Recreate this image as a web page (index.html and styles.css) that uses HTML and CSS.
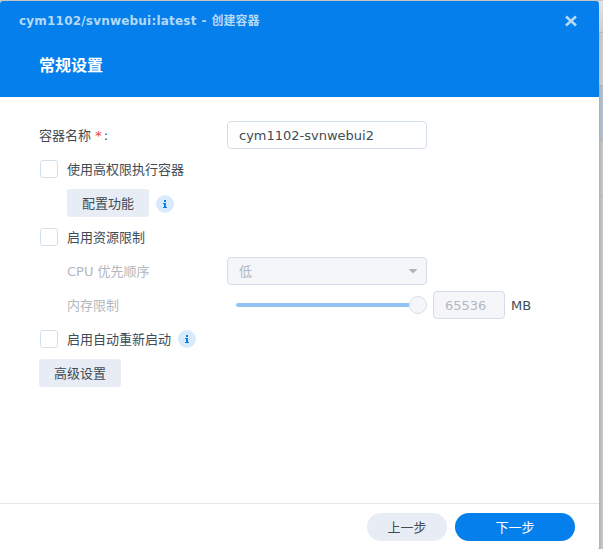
FILE: index.html
```
<!DOCTYPE html>
<html lang="zh-CN">
<head>
<meta charset="utf-8">
<title>创建容器</title>
<link rel="stylesheet" href="styles.css">
</head>
<body>
<div class="desktop">
  <main class="dialog">
    <header class="header">
      <div class="titlebar">
        <span class="title"><span class="title-name">cym1102/svnwebui:latest</span><span class="dash">-</span>创建容器</span>
        <svg class="close" width="12" height="12" viewBox="0 0 12 12"><path d="M1 1.5 11 10.5M11 1.5 1 10.5"/></svg>
      </div>
      <h1 class="heading">常规设置</h1>
    </header>
    <section class="form">
      <div class="row">
        <span class="label">容器名称 <span class="required">*</span>:</span>
        <span class="field name">cym1102-svnwebui2</span>
      </div>
      <div class="row"><span class="checkbox"></span><span class="text">使用高权限执行容器</span></div>
      <div class="row indent">
        <span class="button">配置功能</span>
        <svg class="info low" width="18" height="18" viewBox="0 0 18 18"><circle cx="9" cy="9" r="9"/><path d="M8 5h2v2H8zM7 8h3v4h1v1H7v-1h1V9H7z"/></svg>
      </div>
      <div class="row"><span class="checkbox"></span><span class="text">启用资源限制</span></div>
      <div class="row indent disabled">
        <span class="label">CPU 优先顺序</span>
        <span class="field select">低<svg width="10" height="5" viewBox="0 0 10 5"><path d="M0.5 0h9L5 4.5z"/></svg></span>
      </div>
      <div class="row indent disabled">
        <span class="label">内存限制</span>
        <span class="slider"><span class="track"></span><span class="thumb"></span></span>
        <span class="field memory">65536</span>
        <span class="unit">MB</span>
      </div>
      <div class="row">
        <span class="checkbox"></span><span class="text">启用自动重新启动</span>
        <svg class="info" width="18" height="18" viewBox="0 0 18 18"><circle cx="9" cy="9" r="9"/><path d="M8 5h2v2H8zM7 8h3v4h1v1H7v-1h1V9H7z"/></svg>
      </div>
      <div class="row"><span class="button">高级设置</span></div>
    </section>
    <footer class="footer">
      <span class="button pill">上一步</span>
      <span class="button pill primary">下一步</span>
    </footer>
  </main>
  <aside class="backdrop"><i class="b1"></i><i class="b2"></i><i class="b3"></i><i class="b4"></i></aside>
</div>
</body>
</html>
```

FILE: styles.css
```
* { box-sizing: border-box; }
body {
  margin: 0;
  font: 13px/28px "DejaVu Sans", "Noto Sans CJK SC", sans-serif;
  color: #414b55;
}
.desktop {
  display: flex;
  width: 603px;
  height: 549px;
  padding-top: 1px;
  overflow: hidden;
  background: #c6c6c6;
}
.dialog {
  display: flex;
  flex-direction: column;
  width: 599px;
  background: #fff;
  border-radius: 3px 3px 2px 0;
  overflow: hidden;
}
.header { height: 96px; background: #057feb; color: #fff; }
.titlebar {
  display: flex;
  align-items: center;
  justify-content: space-between;
  height: 40px;
  padding: 0 22px 0 19px;
  color: #b4d9f9;
}
.title { font-size: 12px; font-weight: bold; white-space: nowrap; }
.title-name { letter-spacing: 0.2px; }
.dash { display: inline-block; width: 15px; text-align: center; }
.close { fill: none; stroke: #b4d9f9; stroke-width: 2.6; }
.heading { margin: 11px 0 0 39px; font-size: 16px; line-height: 28px; font-weight: bold; }
.form {
  display: flex;
  flex-direction: column;
  gap: 6px;
  padding: 24px 39px 0;
  flex: 1;
}
.row { display: flex; align-items: center; height: 28px; white-space: nowrap; }
.indent { padding-left: 28px; }
.label { width: 188px; padding-top: 1px; }
.text, .unit { padding-top: 1px; }
.indent .label { width: 160px; }
.required { margin-right: 1px; color: #e64040; letter-spacing: 1px; }
.field {
  height: 28px;
  padding: 0 11px;
  border: 1px solid #d3dee8;
  border-radius: 4px;
  line-height: 27px;
}
.name { width: 200px; }
.checkbox {
  width: 18px;
  height: 18px;
  margin: 0 9px 0 1px;
  border: 1px solid #d3e0ea;
  border-radius: 3px;
}
.button {
  height: 28px;
  padding: 0 15px;
  border-radius: 3px;
  background: #e8edf5;
  line-height: 29px;
  text-align: center;
}
.info { margin-left: 7px; }
.low { margin-top: 2px; }
.info circle { fill: #d9eafc; }
.info path { fill: #057feb; }
.disabled { color: #b3b8bd; }
.disabled .field { background: #f4f6fa; }
.select { display: flex; align-items: center; justify-content: space-between; width: 200px; padding-right: 8px; }
.select svg { fill: #b0b5ba; }
.slider { display: flex; align-items: center; width: 200px; padding-left: 9px; }
.track { flex: 1; height: 4px; border-radius: 2px 0 0 2px; background: #91c4f3; }
.thumb { width: 18px; height: 18px; border: 1px solid #dadfe8; border-radius: 50%; background: #f4f6fa; }
.memory { width: 72px; margin: 0 6px; }
.unit { color: #414b55; }
.footer {
  display: flex;
  justify-content: flex-end;
  gap: 8px;
  height: 46px;
  padding: 9px 24px 0 0;
  border-top: 1px solid #e4e6e8;
}
.pill { width: 80px; border-radius: 14px; }
.primary { width: 120px; background: #057feb; color: #fff; }
.backdrop {
  display: flex;
  flex-direction: column;
  width: 4px;
  background: linear-gradient(90deg, #b2b2b2, #cacaca);
}
.backdrop i { border-bottom: 1px solid #b0b5ba; }
.b1 { height: 32px; background: linear-gradient(#e4e4e4, #cecece); }
.b2 { height: 53px; background: linear-gradient(90deg, #bebebe, #d0d0d0); }
.b3 { height: 55px; background: linear-gradient(90deg, #a5afba, #b9c4d0); }
.b4 { height: 55px; }
```
